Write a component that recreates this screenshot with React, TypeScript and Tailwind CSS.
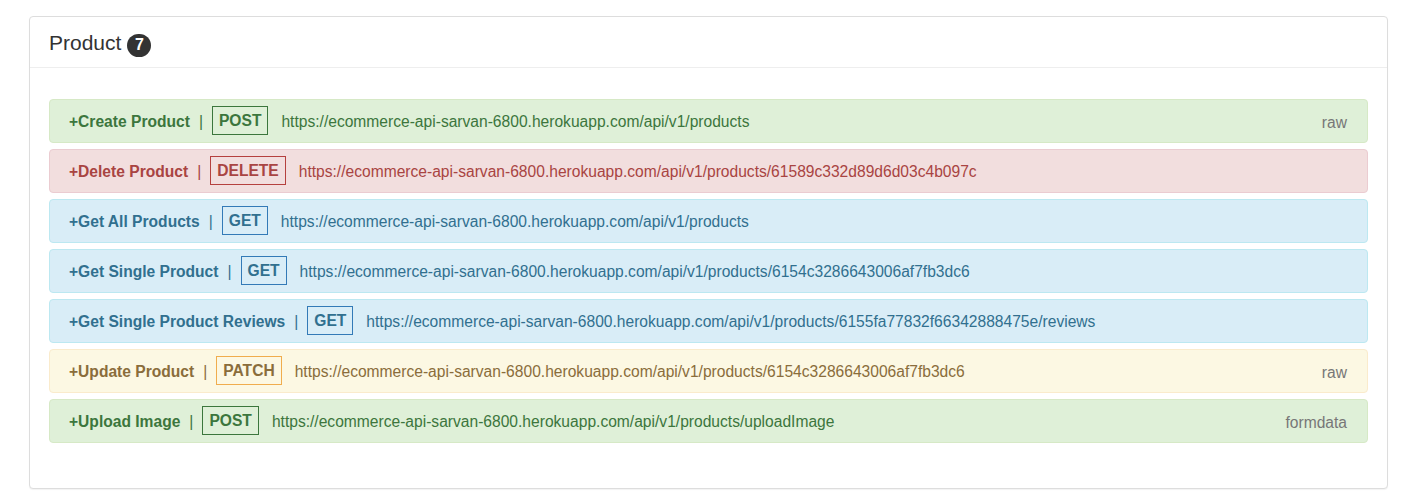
const ROWS: {
  name: string;
  method: string;
  url: string;
  kind: "success" | "danger" | "info" | "warning";
  body?: string;
}[] = [
  {
    name: "+Create Product",
    method: "POST",
    url: "https://ecommerce-api-sarvan-6800.herokuapp.com/api/v1/products",
    kind: "success",
    body: "raw",
  },
  {
    name: "+Delete Product",
    method: "DELETE",
    url: "https://ecommerce-api-sarvan-6800.herokuapp.com/api/v1/products/61589c332d89d6d03c4b097c",
    kind: "danger",
  },
  {
    name: "+Get All Products",
    method: "GET",
    url: "https://ecommerce-api-sarvan-6800.herokuapp.com/api/v1/products",
    kind: "info",
  },
  {
    name: "+Get Single Product",
    method: "GET",
    url: "https://ecommerce-api-sarvan-6800.herokuapp.com/api/v1/products/6154c3286643006af7fb3dc6",
    kind: "info",
  },
  {
    name: "+Get Single Product Reviews",
    method: "GET",
    url: "https://ecommerce-api-sarvan-6800.herokuapp.com/api/v1/products/6155fa77832f66342888475e/reviews",
    kind: "info",
  },
  {
    name: "+Update Product",
    method: "PATCH",
    url: "https://ecommerce-api-sarvan-6800.herokuapp.com/api/v1/products/6154c3286643006af7fb3dc6",
    kind: "warning",
    body: "raw",
  },
  {
    name: "+Upload Image",
    method: "POST",
    url: "https://ecommerce-api-sarvan-6800.herokuapp.com/api/v1/products/uploadImage",
    kind: "success",
    body: "formdata",
  },
];

const ALERT = {
  success: "bg-[#dff0d8] border-[#d6e9c6] text-[#3c763d]",
  danger: "bg-[#f2dede] border-[#ebccd1] text-[#a94442]",
  info: "bg-[#d9edf7] border-[#bce8f1] text-[#31708f]",
  warning: "bg-[#fcf8e3] border-[#faebcc] text-[#8a6d3b]",
};

const BADGE = {
  success: "border-[#3c763d]",
  danger: "border-[#b5403e]",
  info: "border-[#337ab7]",
  warning: "border-[#f0ad4e]",
};

export default function App() {
  return (
    <div
      className="min-h-screen bg-white px-[29px] pt-4 pb-3 text-[#333]"
      style={{ fontFamily: '"Liberation Sans", Arial, sans-serif' }}
    >
      <div className="rounded border border-[#ddd] bg-white shadow-[0_1px_1px_rgba(0,0,0,0.05)]">
        <div className="flex h-[51px] items-center border-b border-[#eee] px-[19px]">
          <h3 className="text-[21px] leading-none text-[#333]">Product</h3>
          <span className="ml-[6px] mt-[6px] flex h-[23px] min-w-[24px] items-center justify-center rounded-full bg-[#333] px-[6px] text-[16px] font-bold text-white">
            7
          </span>
        </div>
        <div className="flex flex-col gap-[6px] px-[19px] pt-[31px] pb-[45px]">
          {ROWS.map((row) => (
            <div
              key={row.name}
              className={`flex h-[44px] items-center rounded border pl-[19px] pr-[20px] text-[15.6px] ${ALERT[row.kind]}`}
            >
              <b className="mt-[1px] font-bold">{row.name}</b>
              <span className="mx-[9px] mt-[1px]">|</span>
              <span
                className={`mb-[2px] flex h-[29px] items-center border px-[6px] pt-[1px] font-bold ${BADGE[row.kind]}`}
              >
                {row.method}
              </span>
              <span className="ml-[13px] mt-[1px]">{row.url}</span>
              {row.body && (
                <span className="ml-auto mt-[4px] text-[#777]">{row.body}</span>
              )}
            </div>
          ))}
        </div>
      </div>
    </div>
  );
}
